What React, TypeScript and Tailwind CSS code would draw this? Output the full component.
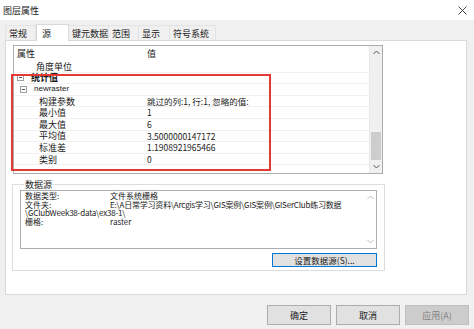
import React from "react";

const F = { fontFamily: '"Noto Sans CJK SC", "Liberation Sans", sans-serif' };

function Minus() {
  return (
    <div className="w-[7px] h-[7px] border border-[#a0a0a0] flex items-center justify-center bg-white">
      <div className="w-[3px] h-[1px] bg-[#555]" />
    </div>
  );
}

function Chevron({ up, color = "#555" }: { up?: boolean; color?: string }) {
  return (
    <svg width="7" height="5" viewBox="0 0 7 5">
      <path d={up ? "M0.5 4 L3.5 1 L6.5 4" : "M0.5 1 L3.5 4 L6.5 1"} fill="none" stroke={color} strokeWidth="1" />
    </svg>
  );
}

type Row = { label: string; value?: string; indent: number; icon?: boolean; bold?: boolean };
const rows: Row[] = [
  { label: "角度单位", indent: 22, value: "" },
  { label: "统计值", indent: 19, icon: true, bold: true },
  { label: "newraster", indent: 22, icon: true },
  { label: "构建参数", indent: 25, value: "跳过的列:1, 行:1, 忽略的值:" },
  { label: "最小值", indent: 25, value: "1" },
  { label: "最大值", indent: 25, value: "6" },
  { label: "平均值", indent: 25, value: "3.5000000147172" },
  { label: "标准差", indent: 25, value: "1.1908921965466" },
  { label: "类别", indent: 25, value: "0" },
];

export default function App() {
  const tabs = [
    { t: "常规", w: 31 },
    { t: "源", w: 33, sel: true },
    { t: "键元数据", w: 40 },
    { t: "范围", w: 30 },
    { t: "显示", w: 31 },
    { t: "符号系统", w: 46 },
  ];
  return (
    <div style={F} className="w-[474px] h-[329px] bg-[#f0f0f0] flex flex-col text-[#1a1a1a] text-[9px] leading-none overflow-hidden relative">
      {/* title bar */}
      <div className="h-[20px] bg-white flex items-center justify-between pl-[3px] pr-[7px]">
        <span className="text-[9px]">图层属性</span>
        <svg width="9" height="9" viewBox="0 0 9 9">
          <path d="M0.5 0.5 L8.5 8.5 M8.5 0.5 L0.5 8.5" stroke="#333" strokeWidth="0.9" />
        </svg>
      </div>
      {/* tabs */}
      <div className="h-[20px] flex items-end pl-[5px]">
        {tabs.map((t) =>
          t.sel ? (
            <div key={t.t} style={{ width: t.w }} className="h-[17px] bg-white border border-b-0 border-[#d9d9d9] flex items-center pl-[5px] -mb-[1px] relative z-10 whitespace-nowrap">
              {t.t}
            </div>
          ) : (
            <div key={t.t} style={{ width: t.w }} className="h-[15px] border-t border-r border-[#e3e3e3] flex items-center pl-[3px] first:border-l whitespace-nowrap">
              {t.t}
            </div>
          )
        )}
      </div>
      {/* panel */}
      <div className="mx-[5px] w-[462px] h-[255px] bg-white border border-[#d9d9d9] relative">
        {/* property list */}
        <div className="ml-[7px] mt-[4px] w-[370px] h-[129px] border border-[#adadad] flex">
          <div className="flex-1 flex flex-col overflow-hidden">
            <div className="h-[15px] flex items-center shrink-0">
              <div className="w-[128px] pl-[3px]">属性</div>
              <div className="pl-[5px]">值</div>
            </div>
            {rows.map((r, i) => (
              <div key={i} className="h-[11.6px] shrink-0 flex items-center border-b border-[#f0f0f0]">
                <div className="w-[128px] flex items-center" style={{ paddingLeft: r.icon ? r.indent - 16 : r.indent }}>
                  {r.icon && (
                    <div className="mr-[7px]">
                      <Minus />
                    </div>
                  )}
                  <span className={r.bold ? "font-bold" : ""} style={r.label === "newraster" ? { fontFamily: '"Liberation Sans", sans-serif', fontSize: 8 } : undefined}>
                    {r.label}
                  </span>
                </div>
                <div className="pl-[5px] text-[8.5px]">{r.value}</div>
              </div>
            ))}
          </div>
          {/* scrollbar */}
          <div className="w-[13px] bg-[#f0f0f0] border-l border-[#e8e8e8] flex flex-col items-center">
            <div className="h-[13px] flex items-center justify-center">
              <Chevron up />
            </div>
            <div className="flex-1 w-full flex flex-col justify-end">
              <div className="h-[28px] mx-[1px] bg-[#cdcdcd]" />
            </div>
            <div className="h-[13px] flex items-center justify-center">
              <Chevron />
            </div>
          </div>
        </div>

        {/* data source group */}
        <fieldset className="ml-[6px] mt-[6px] w-[370px] h-[91px] border border-[#dcdcdc] px-[7px]">
          <legend className="ml-[4px] px-[1px] text-[9px]">数据源</legend>
          <div className="mt-[1px] w-[357px] h-[59px] border border-[#abadb3] flex">
            <div className="flex-1 pl-[4px] pt-[1px] text-[8px] leading-[8.5px] overflow-hidden">
              <div className="flex">
                <span className="w-[85px]">数据类型:</span>
                <span>文件系统栅格</span>
              </div>
              <div className="flex">
                <span className="w-[85px] shrink-0">文件夹:</span>
                <span className="whitespace-nowrap tracking-[-0.2px]">E:\A日常学习资料\Arcgis学习\GIS案例\GIS案例\GISerClub练习数据</span>
              </div>
              <div className="tracking-[-0.2px]">\GClubWeek38-data\ex38-1\</div>
              <div className="flex">
                <span className="w-[85px]">栅格:</span>
                <span>raster</span>
              </div>
            </div>
            <div className="w-[11px] flex flex-col justify-between items-center py-[4px]">
              <Chevron up color="#bbb" />
              <Chevron color="#bbb" />
            </div>
          </div>
          <div className="flex justify-end mt-[4px]">
            <div className="w-[105px] h-[14px] bg-[#e1e1e1] border border-[#0078d7] flex items-center justify-center text-[8.5px]">
              设置数据源(S)...
            </div>
          </div>
        </fieldset>

        {/* red annotation */}
        <div className="absolute left-[5px] top-[33px] w-[260px] h-[97px] border-2 border-[#e53935] pointer-events-none" />
      </div>

      {/* bottom buttons */}
      <div className="flex justify-end gap-[5px] pr-[5px] mt-[10px]">
        <div className="w-[64px] h-[20px] bg-[#e1e1e1] border border-[#adadad] flex items-center justify-center">确定</div>
        <div className="w-[64px] h-[20px] bg-[#e1e1e1] border border-[#adadad] flex items-center justify-center">取消</div>
        <div className="w-[64px] h-[20px] bg-[#cccccc] border border-[#bfbfbf] flex items-center justify-center text-[#838383]">应用(A)</div>
      </div>
    </div>
  );
}
